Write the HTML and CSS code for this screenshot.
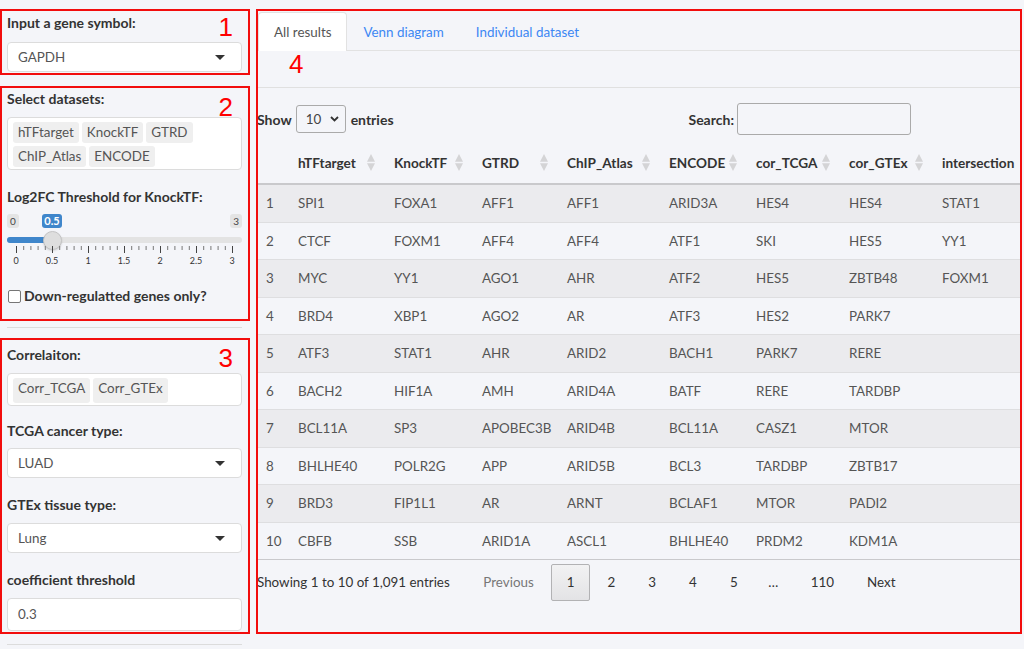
FILE: index.html
```html
<!DOCTYPE html>
<html>
<head>
<meta charset="utf-8">
<link rel="stylesheet" href="styles.css">
</head>
<body>
<div class="page">
  <aside class="sidebar">
    <section class="box box1">
      <span class="num num1">1</span>
      <label class="lbl">Input a gene symbol:</label>
      <div class="select sel1"><span>GAPDH</span><span class="caret"></span></div>
    </section>

    <section class="box box2">
      <span class="num num2">2</span>
      <label class="lbl">Select datasets:</label>
      <div class="multi multi2">
        <span class="tag">hTFtarget</span><span class="tag">KnockTF</span><span class="tag">GTRD</span>
        <span class="tag">ChIP_Atlas</span><span class="tag">ENCODE</span>
      </div>
      <label class="lbl lbl-log">Log2FC Threshold for KnockTF:</label>
      <div class="slider">
        <span class="irs-min">0</span>
        <span class="irs-max">3</span>
        <span class="irs-single" style="left:35px">0.5</span>
        <div class="irs-track"><div class="irs-bar" style="width:45px"></div></div>
        <span class="irs-handle" style="left:35.5px"></span>
        <svg class="irs-grid" width="235" height="8" viewBox="0 0 235 8">
          <g stroke="#444" stroke-width="1">
            <path d="M9.5 0V7M45.5 0V7M81.5 0V7M117.5 0V7M153.5 0V7M189.5 0V7M225.5 0V7"/>
          </g>
          <g stroke="#777" stroke-width="1">
            <path d="M16.7 0V4M23.9 0V4M31.1 0V4M38.3 0V4M52.7 0V4M59.9 0V4M67.1 0V4M74.3 0V4M88.7 0V4M95.9 0V4M103.1 0V4M110.3 0V4M124.7 0V4M131.9 0V4M139.1 0V4M146.3 0V4M160.7 0V4M167.9 0V4M175.1 0V4M182.3 0V4M196.7 0V4M203.9 0V4M211.1 0V4M218.3 0V4"/>
          </g>
        </svg>
        <span class="gtxt" style="left:9px">0</span>
        <span class="gtxt" style="left:45px">0.5</span>
        <span class="gtxt" style="left:81px">1</span>
        <span class="gtxt" style="left:117px">1.5</span>
        <span class="gtxt" style="left:153px">2</span>
        <span class="gtxt" style="left:189px">2.5</span>
        <span class="gtxt" style="left:225px">3</span>
      </div>
      <label class="check"><span class="cbox"></span><span>Down-regulatted genes only?</span></label>
    </section>

    <hr class="sep sep1">

    <section class="box box3">
      <span class="num num3">3</span>
      <label class="lbl">Correlaiton:</label>
      <div class="multi multi3"><span class="tag">Corr_TCGA</span><span class="tag">Corr_GTEx</span></div>
      <label class="lbl lbl-gap">TCGA cancer type:</label>
      <div class="select sel-gap1"><span>LUAD</span><span class="caret"></span></div>
      <label class="lbl lbl-gap2">GTEx tissue type:</label>
      <div class="select sel-gap2"><span>Lung</span><span class="caret"></span></div>
      <label class="lbl lbl-gap2">coefficient threshold</label>
      <div class="textinput">0.3</div>
    </section>

    <hr class="sep sep2">
  </aside>

  <main class="main">
    <span class="num num4">4</span>
    <nav class="tabs">
      <span class="tab active">All results</span>
      <span class="tab">Venn diagram</span>
      <span class="tab">Individual dataset</span>
    </nav>
    <hr class="rule">
    <div class="dt">
      <div class="dt-top">
        <div class="dt-length">Show
          <span class="lensel"><span>10</span>
            <svg width="9" height="6" viewBox="0 0 9 6"><path d="M1 1L4.5 4.5L8 1" fill="none" stroke="#333" stroke-width="1.8"/></svg>
          </span> entries</div>
        <div class="dt-search">Search: <span class="searchbox"></span></div>
      </div>
    </div>
    <div class="scroll">
      <table class="grid">
        <colgroup>
          <col style="width:32px"><col style="width:96px"><col style="width:88px"><col style="width:85px"><col style="width:102px"><col style="width:87px"><col style="width:93px"><col style="width:93px"><col style="width:110px">
        </colgroup>
        <thead>
          <tr>
            <th></th>
            <th>hTFtarget<svg class="sort" width="8" height="17" viewBox="0 0 8 17"><path d="M4 0L8 7.8H0Z M4 17L0 9.2H8Z"/></svg></th>
            <th>KnockTF<svg class="sort" width="8" height="17" viewBox="0 0 8 17"><path d="M4 0L8 7.8H0Z M4 17L0 9.2H8Z"/></svg></th>
            <th>GTRD<svg class="sort" width="8" height="17" viewBox="0 0 8 17"><path d="M4 0L8 7.8H0Z M4 17L0 9.2H8Z"/></svg></th>
            <th>ChIP_Atlas<svg class="sort" width="8" height="17" viewBox="0 0 8 17"><path d="M4 0L8 7.8H0Z M4 17L0 9.2H8Z"/></svg></th>
            <th>ENCODE<svg class="sort" width="8" height="17" viewBox="0 0 8 17"><path d="M4 0L8 7.8H0Z M4 17L0 9.2H8Z"/></svg></th>
            <th>cor_TCGA<svg class="sort" width="8" height="17" viewBox="0 0 8 17"><path d="M4 0L8 7.8H0Z M4 17L0 9.2H8Z"/></svg></th>
            <th>cor_GTEx<svg class="sort" width="8" height="17" viewBox="0 0 8 17"><path d="M4 0L8 7.8H0Z M4 17L0 9.2H8Z"/></svg></th>
            <th>intersection<svg class="sort" width="8" height="17" viewBox="0 0 8 17"><path d="M4 0L8 7.8H0Z M4 17L0 9.2H8Z"/></svg></th>
          </tr>
        </thead>
        <tbody>
          <tr><td>1</td><td>SPI1</td><td>FOXA1</td><td>AFF1</td><td>AFF1</td><td>ARID3A</td><td>HES4</td><td>HES4</td><td>STAT1</td></tr>
          <tr><td>2</td><td>CTCF</td><td>FOXM1</td><td>AFF4</td><td>AFF4</td><td>ATF1</td><td>SKI</td><td>HES5</td><td>YY1</td></tr>
          <tr><td>3</td><td>MYC</td><td>YY1</td><td>AGO1</td><td>AHR</td><td>ATF2</td><td>HES5</td><td>ZBTB48</td><td>FOXM1</td></tr>
          <tr><td>4</td><td>BRD4</td><td>XBP1</td><td>AGO2</td><td>AR</td><td>ATF3</td><td>HES2</td><td>PARK7</td><td></td></tr>
          <tr><td>5</td><td>ATF3</td><td>STAT1</td><td>AHR</td><td>ARID2</td><td>BACH1</td><td>PARK7</td><td>RERE</td><td></td></tr>
          <tr><td>6</td><td>BACH2</td><td>HIF1A</td><td>AMH</td><td>ARID4A</td><td>BATF</td><td>RERE</td><td>TARDBP</td><td></td></tr>
          <tr><td>7</td><td>BCL11A</td><td>SP3</td><td>APOBEC3B</td><td>ARID4B</td><td>BCL11A</td><td>CASZ1</td><td>MTOR</td><td></td></tr>
          <tr><td>8</td><td>BHLHE40</td><td>POLR2G</td><td>APP</td><td>ARID5B</td><td>BCL3</td><td>TARDBP</td><td>ZBTB17</td><td></td></tr>
          <tr><td>9</td><td>BRD3</td><td>FIP1L1</td><td>AR</td><td>ARNT</td><td>BCLAF1</td><td>MTOR</td><td>PADI2</td><td></td></tr>
          <tr><td>10</td><td>CBFB</td><td>SSB</td><td>ARID1A</td><td>ASCL1</td><td>BHLHE40</td><td>PRDM2</td><td>KDM1A</td><td></td></tr>
        </tbody>
      </table>
    </div>
    <div class="dt">
      <div class="dt-bottom">
        <div class="dt-info">Showing 1 to 10 of 1,091 entries</div>
        <div class="pager">
          <span class="pbtn disabled">Previous</span>
          <span class="pbtn current">1</span>
          <span class="pbtn">2</span>
          <span class="pbtn">3</span>
          <span class="pbtn">4</span>
          <span class="pbtn">5</span>
          <span class="ellipsis">…</span>
          <span class="pbtn">110</span>
          <span class="pbtn">Next</span>
        </div>
      </div>
    </div>
  </main>
</div>
</body>
</html>
```

FILE: styles.css
```css
* { box-sizing: border-box; }

html, body {
  margin: 0;
  height: 649px;
  overflow: hidden;
}

body {
  background: #f4f5f9;
  font-family: Lato, "Noto Sans", sans-serif;
  font-size: 13.4px;
  color: #333;
}

.page {
  display: flex;
  padding-top: 9px;
}

/* ---------- sidebar ---------- */
.sidebar {
  width: 250px;
  flex: none;
  display: flex;
  flex-direction: column;
}

.box {
  position: relative;
  border: 2px solid #f20d0d;
  padding: 0 6px 0 5px;
}

.box1 { padding-top: 2px; padding-bottom: 1px; }
.box2 { margin-top: 11px; padding-top: 1px; padding-bottom: 13px; }
.box3 { margin-top: 10px; padding-top: 5px; padding-bottom: 1px; }

.num {
  position: absolute;
  font-family: "Liberation Sans", Arial, sans-serif;
  font-size: 26px;
  line-height: 26px;
  color: #f00;
}
.num1 { right: 15px; top: 3px; }
.num2 { right: 15px; top: 6px; }
.num3 { right: 15px; top: 5px; }
.num4 { left: 31px; top: 40px; }

.lbl {
  display: block;
  font-size: 14px;
  font-weight: 700;
  line-height: 20px;
  color: #333;
}
.lbl-log { margin-top: 17px; }
.lbl-gap { margin-top: 15px; }
.lbl-gap2 { margin-top: 17px; }

.select {
  height: 30px;
  margin-top: 9px;
  background: #fff;
  border: 1px solid #dcdcdc;
  border-radius: 4px;
  display: flex;
  align-items: center;
  justify-content: space-between;
  padding: 0 16px 0 10px;
  color: #555;
}
.sel-gap1 { margin-top: 7px; }
.sel-gap2 { margin-top: 8px; }

.caret {
  width: 0;
  height: 0;
  border-left: 5px solid transparent;
  border-right: 5px solid transparent;
  border-top: 5px solid #333;
}

.multi {
  margin-top: 8px;
  background: #fff;
  border: 1px solid #dcdcdc;
  border-radius: 4px;
  padding: 4px 5px 2px;
  display: flex;
  flex-wrap: wrap;
  column-gap: 3px;
  row-gap: 3px;
}
.multi2 { height: 53px; }
.multi3 { height: 33px; }

.tag {
  background: #efefef;
  border-radius: 3px;
  padding: 0 5px;
  line-height: 21px;
  color: #555;
}

.textinput {
  margin-top: 8px;
  height: 33px;
  background: #fff;
  border: 1px solid #dcdcdc;
  border-radius: 4px;
  padding: 0 10px;
  line-height: 31px;
  color: #555;
}

/* slider */
.slider {
  position: relative;
  height: 65px;
}
.irs-min, .irs-max {
  position: absolute;
  top: 7px;
  height: 14px;
  line-height: 14px;
  padding: 0 3px;
  font-size: 10px;
  color: #444;
  background: #e4e4e4;
  border-radius: 3px;
}
.irs-min { left: 0; }
.irs-max { right: 0; }
.irs-single {
  position: absolute;
  top: 7px;
  width: 20px;
  height: 14px;
  line-height: 14px;
  text-align: center;
  font-size: 11px;
  font-weight: 700;
  color: #fff;
  background: #3f86cb;
  border-radius: 3px;
}
.irs-track {
  position: absolute;
  left: 0;
  right: 0;
  top: 30px;
  height: 6px;
  background: #e3e3e3;
  border-radius: 3px;
  overflow: hidden;
}
.irs-bar {
  height: 100%;
  background: #3f86cb;
}
.irs-handle {
  position: absolute;
  top: 23.5px;
  width: 19px;
  height: 19px;
  border-radius: 50%;
  background: #dedede;
  border: 1px solid #c4c4c4;
  box-shadow: 0 1px 2px rgba(0,0,0,0.15);
}
.irs-grid {
  position: absolute;
  left: 0;
  top: 39px;
}
.gtxt {
  position: absolute;
  top: 48px;
  font-size: 9px;
  line-height: 12px;
  color: #333;
  transform: translateX(-50%);
}

.check {
  margin-top: 14px;
  display: flex;
  align-items: center;
  gap: 3px;
  line-height: 20px;
  font-size: 14px;
  font-weight: 700;
}
.cbox {
  width: 13px;
  height: 13px;
  flex: none;
  background: #fff;
  border: 1px solid #767676;
  border-radius: 2px;
  margin-left: 1px;
}

.sep {
  border: 0;
  border-top: 1px solid #dcdcdc;
  margin: 0 8px 0 7px;
}
.sep1 { margin-top: 6px; }
.sep2 { margin-top: 10px; }

/* ---------- main ---------- */
.main {
  position: relative;
  margin-left: 6px;
  width: 766px;
  height: 625px;
  border: 2px solid #f20d0d;
  overflow: hidden;
}

.tabs {
  display: flex;
  margin-top: 1px;
  border-bottom: 1px solid #e2e2e2;
}
.tab {
  padding: 1px 15px 0;
  line-height: 36px;
  border: 1px solid transparent;
  border-bottom: 0;
  color: #3c87f4;
}
.tab.active {
  background: #fff;
  color: #555;
  border-color: #e2e2e2;
  border-radius: 4px 4px 0 0;
  margin-bottom: -1px;
  padding-bottom: 1px;
}

.rule {
  border: 0;
  border-top: 1px solid #e0e0e0;
  margin: 36px 0 0;
}

.dt { width: 653px; }

.dt-top {
  margin-top: 15px;
  height: 32px;
  display: flex;
  justify-content: space-between;
  align-items: center;
}
.dt-length, .dt-search {
  display: flex;
  align-items: center;
  font-size: 14px;
  font-weight: 700;
}
.dt-length { margin-left: -1px; }
.lensel {
  width: 50px;
  height: 28px;
  margin: 0 5px 0 4px;
  border: 1px solid #aaa;
  border-radius: 3px;
  display: flex;
  align-items: center;
  justify-content: space-between;
  padding: 0 6px 0 9px;
  font-size: 13.4px;
  font-weight: 400;
  color: #444;
}
.searchbox {
  width: 174px;
  height: 32px;
  margin-left: 3px;
  border: 1px solid #aaa;
  border-radius: 3px;
}

.scroll { width: 762px; overflow: hidden; }

.grid {
  margin-top: 8px;
  table-layout: fixed;
  border-collapse: collapse;
  width: 786px;
}
.grid th {
  position: relative;
  text-align: left;
  padding: 10px 8px;
  line-height: 20px;
  font-size: 13.6px;
  font-weight: 700;
  color: #333;
  border-bottom: 2px solid #c9c9cc;
  white-space: nowrap;
}
.sort {
  position: absolute;
  right: 11px;
  top: 11px;
  fill: #d4d4d6;
}
.grid td {
  padding: 8px 7px 8px 8px;
  line-height: 20.5px;
  color: #555;
  border-bottom: 1px solid #dedee0;
  white-space: nowrap;
}
.grid tbody tr:nth-child(odd) td { background: #ebebee; }
.grid tbody tr:last-child td { border-bottom-color: #c9c9cc; }

.dt-bottom {
  height: 44px;
  display: flex;
  justify-content: space-between;
  align-items: center;
}
.dt-info { margin-left: -1px; color: #333; }
.pager { display: flex; align-items: center; }
.pbtn {
  padding: 0 14.5px;
  line-height: 35px;
  border: 1px solid transparent;
  border-radius: 2px;
  margin-left: 2px;
  color: #333;
}
.pbtn.disabled { color: #777; }
.pbtn.current {
  background: linear-gradient(#f2f2f3, #e3e3e5);
  border-color: #b2b2b4;
}
.ellipsis { padding: 0 15px; color: #333; }
```
